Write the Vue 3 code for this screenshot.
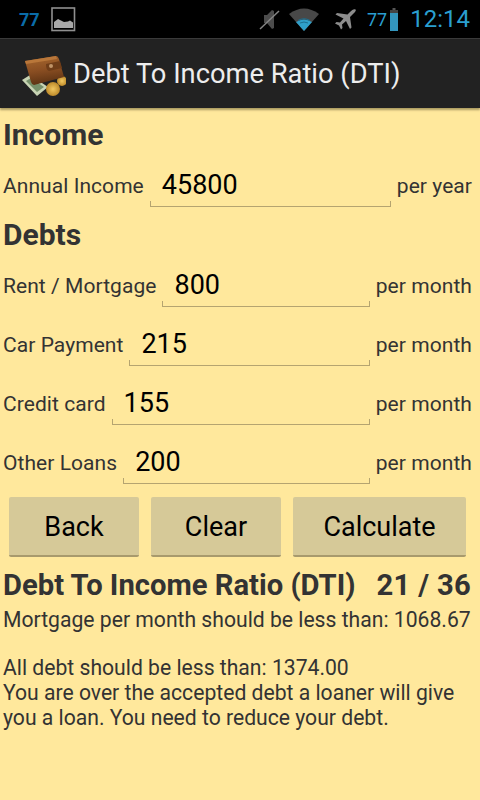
<script setup>
const debts = [
  { label: 'Rent / Mortgage', value: '800' },
  { label: 'Car Payment', value: '215' },
  { label: 'Credit card', value: '155' },
  { label: 'Other Loans', value: '200' }
]
</script>

<template>
  <div class="phone">
    <div class="status">
      <span class="notif">77</span>
      <svg class="pic" width="25" height="25" viewBox="0 0 25 25">
        <rect x="1" y="1" width="22.5" height="22.5" fill="none" stroke="#8f8f8f" stroke-width="1.6"/>
        <path d="M3 21V15L7 12L10 13.5L13 15L17 14.5L19 13.5L22 15.5V21Z" fill="#a8a8a8"/>
      </svg>
      <span class="spacer"></span>
      <svg class="mute" width="21" height="24" viewBox="0 0 21 24">
        <path d="M5 8H8L13 3L15 4V21L13 22L8 16H5Z" fill="#4c4c4c"/>
        <path d="M1 22L20 4" stroke="#858585" stroke-width="1.5"/>
      </svg>
      <svg class="wifi" width="30" height="23" viewBox="0 0 30 23">
        <path d="M0 6Q15 -5 30 6L15 23Z" fill="#484848"/>
        <path d="M7 14Q15 9 23 14L15 23Z" fill="#2f9fc9"/>
        <path d="M9 12.5Q15 9 21 12.5" fill="none" stroke="#1b6f90" stroke-width="1"/>
        <path d="M11 15Q15 13 19 15" fill="none" stroke="#1b6f90" stroke-width="1"/>
      </svg>
      <svg class="plane" width="22" height="21" viewBox="0 0 22 21">
        <path d="M21.5 0.5C20 -0.5 18 1 16 3L13.5 5.5L3 4L1.5 5.5L9.5 9.5L6 13.5L2.5 13L1 14.5L5 16.5L7 20.5L8.5 19L8 15.5L12 12L16 20L17.5 18.5L16 8L19.5 4.5C21 3 22.5 1.5 21.5 0.5Z" fill="#8c8c8c"/>
      </svg>
      <span class="level">77</span>
      <svg class="battery" width="8" height="23" viewBox="0 0 8 23">
        <rect x="2.5" y="0" width="3" height="3" fill="#555"/>
        <rect x="0" y="2" width="8" height="4" fill="#444"/>
        <rect x="0" y="5" width="8" height="18" fill="#3395bd"/>
      </svg>
      <span class="clock">12:14</span>
    </div>

    <div class="bar">
      <svg class="logo" width="46" height="46" viewBox="0 0 46 46">
        <defs>
          <linearGradient id="leather" x1="0" y1="0" x2="0.2" y2="1">
            <stop offset="0" stop-color="#a9692f"/>
            <stop offset="0.55" stop-color="#8a4e22"/>
            <stop offset="1" stop-color="#5f3414"/>
          </linearGradient>
          <radialGradient id="coin">
            <stop offset="0" stop-color="#f2c860"/>
            <stop offset="1" stop-color="#bd8a2a"/>
          </radialGradient>
        </defs>
        <path d="M2 29L10 24L28 36L17 45Z" fill="#c8d4b4"/>
        <path d="M6 30L11 27L24 36L17 41Z" fill="#76906a"/>
        <circle cx="42" cy="30" r="5" fill="url(#coin)"/>
        <circle cx="33" cy="38" r="7" fill="url(#coin)"/>
        <path d="M5 10L36 5Q38 5 39 8L44 26L14 34Q12 34 11 31Z" fill="url(#leather)"/>
        <path d="M5 10L36 5L37 8L6 13Z" fill="#b9773a"/>
        <path d="M26 13L40 10L42 17L29 20Q26 19 26 13Z" fill="#6f3d18"/>
        <circle cx="31" cy="15" r="2" fill="#c09468"/>
      </svg>
      <span class="title">Debt To Income Ratio (DTI)</span>
    </div>

    <div class="body">
      <h2 class="heading">Income</h2>
      <div class="row">
        <span class="label">Annual Income</span>
        <div class="field">45800</div>
        <span class="unit">per year</span>
      </div>
      <h2 class="heading debts">Debts</h2>
      <div v-for="d in debts" :key="d.label" class="row">
        <span class="label">{{ d.label }}</span>
        <div class="field">{{ d.value }}</div>
        <span class="unit">per month</span>
      </div>

      <div class="buttons">
        <button class="btn back">Back</button>
        <button class="btn clear">Clear</button>
        <button class="btn calc">Calculate</button>
      </div>

      <div class="result">
        <span>Debt To Income Ratio (DTI)</span>
        <span class="ratio">21 / 36</span>
      </div>
      <p class="line">Mortgage per month should be less than: 1068.67</p>
      <p class="line gap">All debt should be less than: 1374.00</p>
      <p class="line">You are over the accepted debt a loaner will give you a loan. You need to reduce your debt.</p>
    </div>
  </div>
</template>

<style>
html, body { margin: 0; padding: 0; }
</style>

<style scoped>
.phone {
  width: 480px;
  height: 800px;
  overflow: hidden;
  display: flex;
  flex-direction: column;
  background: #ffe89c;
  font-family: Roboto, "Liberation Sans", sans-serif;
  color: #333;
}
.status {
  height: 38px;
  flex: none;
  background: #000;
  display: flex;
  align-items: center;
  padding: 0 10px 0 19px;
  box-sizing: border-box;
}
.notif { font-size: 18px; font-weight: 700; color: #0a6ca8; width: 32px; }
.spacer { flex: 1; }
.mute { margin-right: 9px; }
.wifi { margin-right: 15px; }
.plane { margin-right: 11px; }
.level { font-size: 18px; color: #2a9fd0; margin-right: 3px; }
.battery { margin-right: 12px; }
.clock { font-size: 24px; color: #2a9fd0; }
.bar {
  height: 70px;
  flex: none;
  box-sizing: border-box;
  background: #222;
  border-top: 1px solid #3a3a3a;
  display: flex;
  align-items: center;
  padding-left: 20px;
  box-shadow: 0 2px 2px rgba(90, 80, 40, 0.5);
  position: relative;
}
.logo { margin-right: 7px; }
.title { font-size: 27.3px; color: #ededed; white-space: nowrap; }
.body { flex: 1; padding: 0 8px 0 3px; }
.heading { margin: 10px 0 0; font-size: 30px; line-height: 34px; font-weight: 700; color: #333; }
.heading.debts { margin-top: 11px; }
.row { display: flex; align-items: flex-end; height: 55px; margin-bottom: 4px; }
.label, .unit { font-size: 21px; line-height: 24px; margin-bottom: 9px; white-space: nowrap; letter-spacing: 0.06px; }
.field {
  flex: 1;
  margin: 0 6px;
  height: 42px;
  box-sizing: border-box;
  padding: 2px 0 0 12px;
  font-size: 27px;
  line-height: 36px;
  color: #000;
  border-bottom: 1px solid #b5a470;
  position: relative;
}
.field::before, .field::after {
  content: "";
  position: absolute;
  bottom: 0;
  width: 1px;
  height: 5px;
  background: #b5a470;
}
.field::before { left: 0; }
.field::after { right: 0; }
.buttons { display: flex; gap: 12px; margin: 13px 6px 0; height: 60px; }
.btn {
  height: 60px;
  border: none;
  border-radius: 2px;
  background: #d6c998;
  border-bottom: 2px solid #a89a6d;
  font-family: inherit;
  font-size: 27px;
  color: #000;
  padding: 2px 0 0;
}
.back, .clear { width: 130px; }
.calc { width: 173px; }
.result {
  display: flex;
  justify-content: space-between;
  font-size: 29.2px;
  font-weight: 700;
  line-height: 34px;
  margin-top: 11px;
  width: 468px;
  white-space: nowrap;
}
.ratio { letter-spacing: 0.3px; }
.line { margin: 0; font-size: 21.15px; line-height: 25px; width: 470px; }
.result + .line { margin-top: 5px; }
.gap { margin-top: 23px; }
</style>
